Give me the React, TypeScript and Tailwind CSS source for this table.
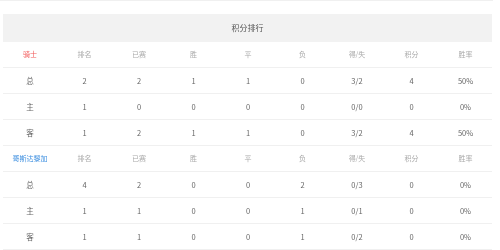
import React from "react";

type Row = { label: string; cells: string[] };
type Team = { name: string; color: string; rows: Row[] };

const headers = ["排名", "已赛", "胜", "平", "负", "得/失", "积分", "胜率"];

const teams: Team[] = [
  {
    name: "骑士",
    color: "text-[#f25a5a]",
    rows: [
      { label: "总", cells: ["2", "2", "1", "1", "0", "3/2", "4", "50%"] },
      { label: "主", cells: ["1", "0", "0", "0", "0", "0/0", "0", "0%"] },
      { label: "客", cells: ["1", "2", "1", "1", "0", "3/2", "4", "50%"] },
    ],
  },
  {
    name: "哥斯达黎加",
    color: "text-[#3d8fe0]",
    rows: [
      { label: "总", cells: ["4", "2", "0", "0", "2", "0/3", "0", "0%"] },
      { label: "主", cells: ["1", "1", "0", "0", "1", "0/1", "0", "0%"] },
      { label: "客", cells: ["1", "1", "0", "0", "1", "0/2", "0", "0%"] },
    ],
  },
];

const gridCols = "grid grid-cols-[54px_55px_54px_55px_54px_55px_54px_55px_53px]";

export default function App() {
  return (
    <div
      className="w-[500px] h-[250px] bg-white overflow-hidden will-change-transform antialiased"
      style={{ fontFamily: '"Noto Sans CJK SC", "Noto Sans", sans-serif' }}
    >
      <div className="w-[493px] h-[1px] bg-[#f0f0f0]" />
      <div className="ml-[3px] w-[489px] mt-[13px]">
        <div className="h-[28px] bg-[#f2f2f2] flex items-center justify-center text-[8px] text-[#555]">
          积分排行
        </div>
        {teams.map((t) => (
          <div key={t.name}>
            <div className={`${gridCols} h-[26px] items-center border-b border-[#f0f0f0] text-[7px] text-[#aaa]`}>
              <div className={`text-center ${t.color}`}>{t.name}</div>
              {headers.map((h) => (
                <div key={h} className="text-center">
                  {h}
                </div>
              ))}
            </div>
            {t.rows.map((r) => (
              <div
                key={r.label}
                className={`${gridCols} h-[26px] items-center border-b border-[#f0f0f0] text-[7.5px] text-[#666]`}
              >
                <div className="text-center">{r.label}</div>
                {r.cells.map((c, i) => (
                  <div key={i} className="text-center">
                    {c}
                  </div>
                ))}
              </div>
            ))}
          </div>
        ))}
      </div>
    </div>
  );
}
